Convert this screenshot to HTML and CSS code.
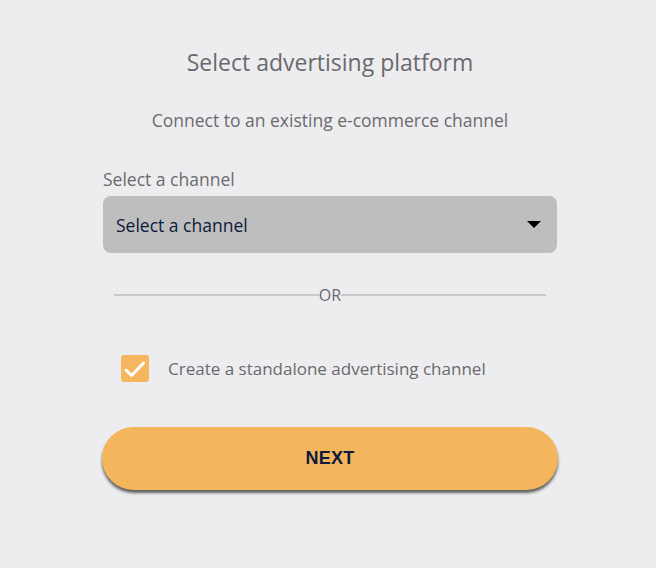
FILE: index.html
```html
<!DOCTYPE html>
<html lang="en">
<head>
<meta charset="utf-8">
<title>Select advertising platform</title>
<link rel="stylesheet" href="styles.css">
</head>
<body>
<main class="page">
  <h1 class="title">Select advertising platform</h1>
  <p class="subtitle">Connect to an existing e-commerce channel</p>
  <div class="field">
    <label class="field-label">Select a channel</label>
    <div class="select">
      <span class="select-value">Select a channel</span>
      <svg class="select-arrow" width="14" height="7" viewBox="0 0 14 7"><path d="M0 0H14L7 7Z" fill="#000"/></svg>
    </div>
  </div>
  <div class="divider">
    <span class="divider-line"></span>
    <span class="divider-text">OR</span>
    <span class="divider-line"></span>
  </div>
  <div class="check-row">
    <span class="checkbox">
      <svg width="28" height="27" viewBox="0 0 28 27"><path d="M5 15L10.5 20.5L22.5 8" fill="none" stroke="#fff" stroke-width="3" stroke-linecap="round" stroke-linejoin="round"/></svg>
    </span>
    <span class="check-label">Create a standalone advertising channel</span>
  </div>
  <button class="next">NEXT</button>
</main>
</body>
</html>
```
FILE: styles.css
```css
html, body {
  margin: 0;
  padding: 0;
  background: #ededef;
}
body {
  width: 656px;
  height: 568px;
  overflow: hidden;
  font-family: "Open Sans", "Noto Sans", sans-serif;
  color: #6c6c70;
}
.page {
  display: flex;
  flex-direction: column;
  width: 456px;
  margin-left: 102px;
  padding-top: 46px;
}
.title {
  margin: 0;
  font-size: 23px;
  font-weight: 400;
  line-height: 32px;
  text-align: center;
  color: #6a6a6e;
}
.subtitle {
  margin: 30px 0 0;
  font-size: 17.5px;
  line-height: 24px;
  text-align: center;
  color: #6a6a6e;
}
.field {
  display: flex;
  flex-direction: column;
  margin-top: 35px;
  padding-left: 1px;
}
.field-label {
  font-size: 17.5px;
  line-height: 24px;
  color: #6a6a6e;
}
.select {
  display: flex;
  align-items: center;
  justify-content: space-between;
  height: 57px;
  margin-top: 5px;
  width: 454px;
  box-sizing: border-box;
  padding: 0 16px 0 13px;
  background: #bebebe;
  border-radius: 8px;
}
.select-value {
  font-size: 17.5px;
  color: #0d1a3a;
}
.select-arrow {
  display: block;
}
.divider {
  display: flex;
  align-items: center;
  margin: 30px 12px 0;
  height: 24px;
}
.divider-line {
  flex: 1;
  height: 2px;
  background: #c9c9cc;
}
.divider-text {
  font-size: 16px;
  line-height: 24px;
  color: #6a6a6e;
}
.check-row {
  display: flex;
  align-items: center;
  margin-top: 48px;
  padding-left: 19px;
}
.checkbox {
  display: block;
  width: 28px;
  height: 27px;
  border-radius: 3px;
  background: #f5b65d;
}
.checkbox svg {
  display: block;
}
.check-label {
  margin-left: 19px;
  font-size: 17px;
  line-height: 24px;
  color: #6a6a6e;
}
.next {
  margin-top: 45px;
  height: 63px;
  width: 456px;
  border: none;
  border-radius: 32px;
  background: #f4b65d;
  box-shadow: 0 3px 3px rgba(0, 0, 0, 0.6);
  font-family: "Liberation Sans", Arial, sans-serif;
  font-weight: 700;
  font-size: 18px;
  color: #0d1a3a;
  letter-spacing: 0.2px;
}
```
